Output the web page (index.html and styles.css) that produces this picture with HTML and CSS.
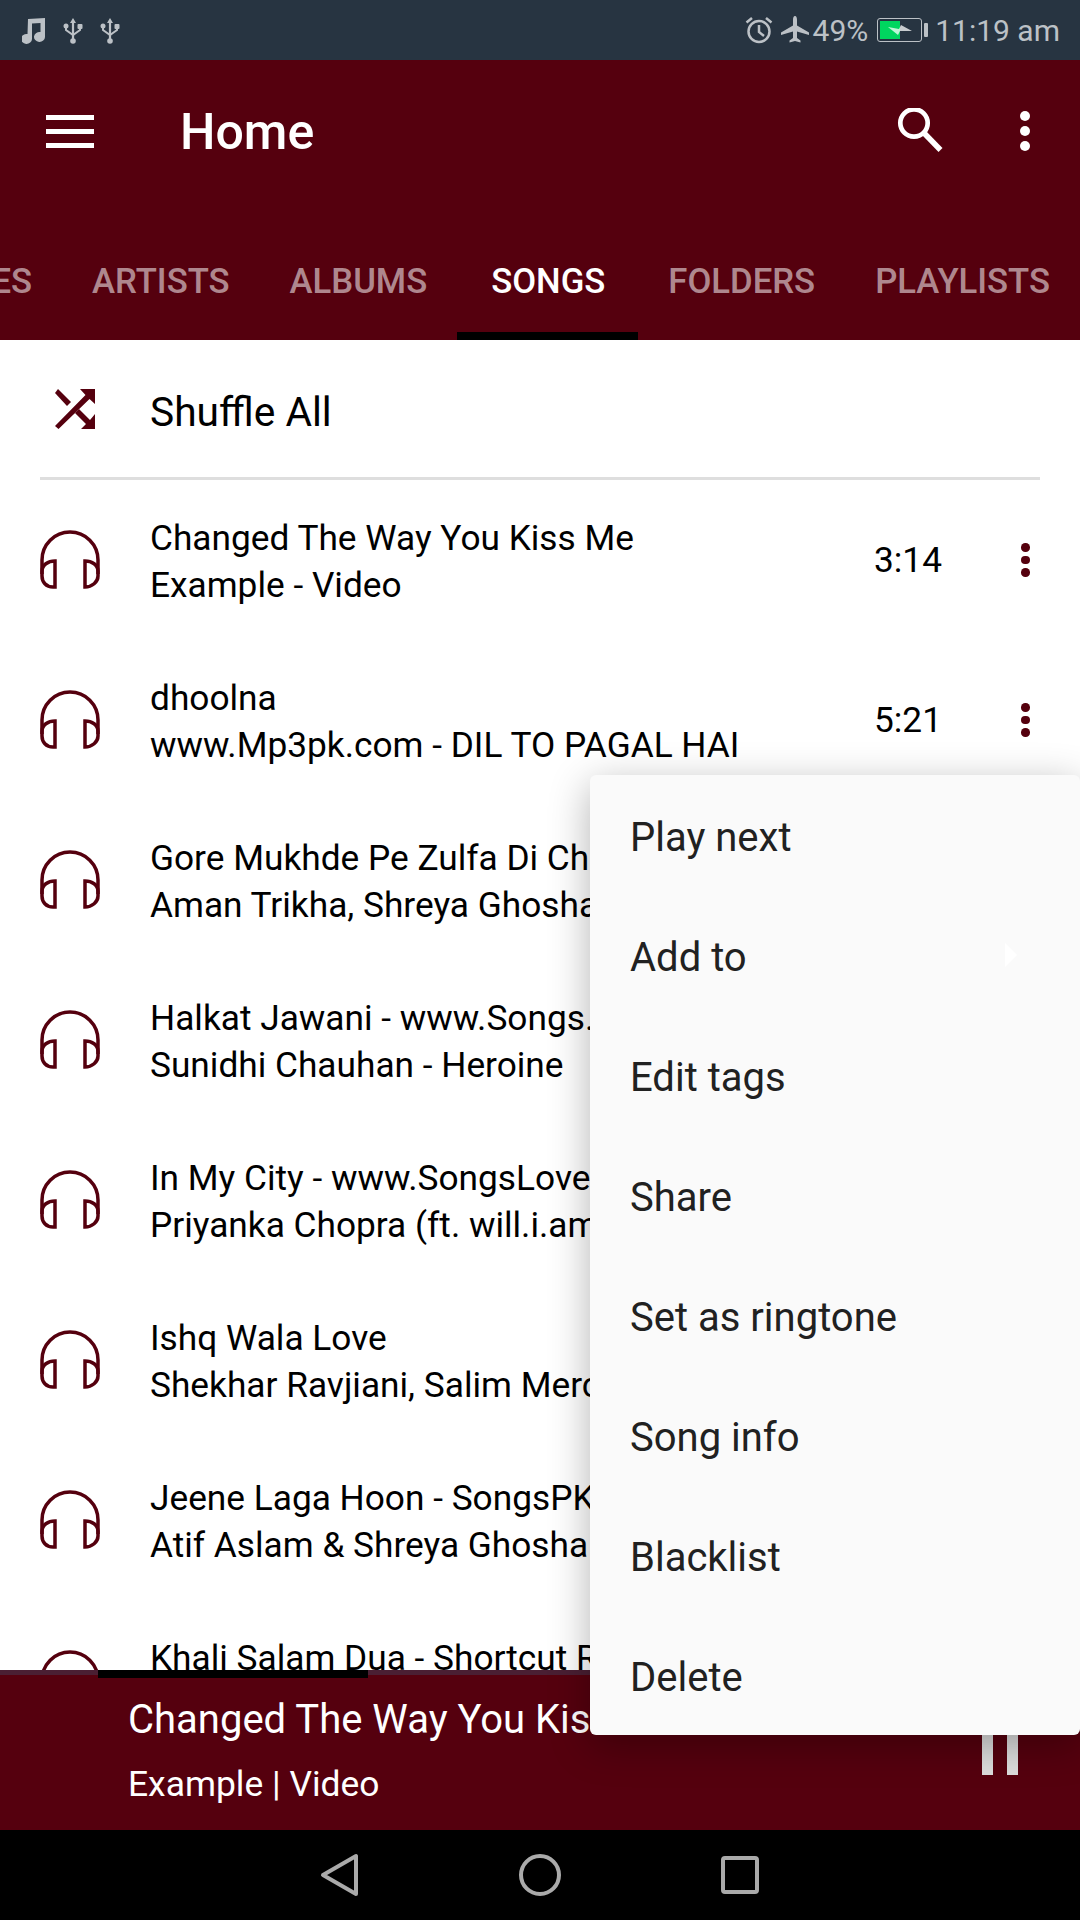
FILE: index.html
```html
<!DOCTYPE html>
<html lang="en">

<head>
    <meta charset="UTF-8">
    <meta name="viewport" content="width=device-width, initial-scale=1.0">
    <title>Home</title>
    <link rel="stylesheet" href="styles.css">
</head>

<body>
    <div class="screen">
        <div class="status-bar">
            <div class="status-left">
                <svg class="icon-note" viewBox="0 0 24 28" width="24" height="28">
                    <path fill="#bcc1c6" d="M6 3 L23 2 V21 A5.5 5 0 1 1 18.5 16 V7 L10 7.500 V23 A5.500 5 0 1 1 5.500 18 Z" />
                </svg>
                <svg viewBox="0 0 20 28" width="20" height="28">
                    <g fill="#bcc1c6" stroke="#bcc1c6">
                        <path d="M10 2 L13 7 H7 Z" stroke="none" />
                        <path d="M10 6 V24" stroke-width="2.200" fill="none" />
                        <path d="M3 11 V14 L10 19 L17 14 V11" stroke-width="2" fill="none" />
                        <circle cx="3" cy="10" r="2.500" stroke="none" />
                        <rect x="14.500" y="8" width="5" height="5" rx="1" stroke="none" />
                        <circle cx="10" cy="25" r="2.800" stroke="none" />
                    </g>
                </svg>
                <svg viewBox="0 0 20 28" width="20" height="28">
                    <g fill="#bcc1c6" stroke="#bcc1c6">
                        <path d="M10 2 L13 7 H7 Z" stroke="none" />
                        <path d="M10 6 V24" stroke-width="2.200" fill="none" />
                        <path d="M3 11 V14 L10 19 L17 14 V11" stroke-width="2" fill="none" />
                        <circle cx="3" cy="10" r="2.500" stroke="none" />
                        <rect x="14.500" y="8" width="5" height="5" rx="1" stroke="none" />
                        <circle cx="10" cy="25" r="2.800" stroke="none" />
                    </g>
                </svg>
            </div>
            <div class="status-right">
                <svg class="icon-alarm" viewBox="0 0 28 28" width="28" height="28">
                    <g fill="none" stroke="#bcc1c6" stroke-width="2.500">
                        <circle cx="14" cy="15.500" r="10.500" />
                        <path d="M14 9 V16 L19 20" />
                        <path d="M1.500 6.500 L7 2 M26.500 6.500 L21 2" />
                    </g>
                </svg>
                <svg class="icon-plane" viewBox="0 0 28 28" width="28" height="28">
                    <path fill="#bcc1c6" d="M14 0 C15.500 0 16 2 16 4 V9.500 L28 16.500 V19 L16 15.500 V22 L19.500 24.500 V26.500 L14 25 L8.500 26.500 V24.500 L12 22 V15.500 L0 19 V16.500 L12 9.500 V4 C12 2 12.500 0 14 0 Z" />
                </svg>
                <span class="battery-pct">49%</span>
                <div class="battery">
                    <div class="battery-fill"></div>
                    <svg class="battery-bolt" viewBox="0 0 24 10" width="24" height="10">
                        <path fill="#fff" fill-opacity="0.75" d="M0 2 L11 4 L13 0 L24 6 L12 6 L10 10 Z" />
                    </svg>
                </div>
                <div class="battery-tip"></div>
                <span class="clock">11:19 am</span>
            </div>
        </div>

        <div class="app-bar">
            <div class="toolbar">
                <div class="hamburger">
                    <span></span>
                    <span></span>
                    <span></span>
                </div>
                <div class="toolbar-title">Home</div>
                <svg class="icon-search" viewBox="0 0 46 46" width="46" height="46">
                    <circle cx="17" cy="15" r="13.700" fill="none" stroke="#fff" stroke-width="4.700" />
                    <path d="M27 25 L43.500 42" stroke="#fff" stroke-width="5.500" />
                </svg>
                <div class="dots dots-white">
                    <span></span>
                    <span></span>
                    <span></span>
                </div>
            </div>
            <div class="tabs">
                <div class="tab">GENRES</div>
                <div class="tab">ARTISTS</div>
                <div class="tab">ALBUMS</div>
                <div class="tab active">SONGS</div>
                <div class="tab">FOLDERS</div>
                <div class="tab">PLAYLISTS</div>
            </div>
        </div>

        <div class="list">
            <div class="shuffle-row">
                <svg class="icon-shuffle" viewBox="0 0 40 40" width="40" height="40">
                    <g fill="#55000e">
                        <path d="M3 0 L16 13 L12 17 L0 4 Z" />
                        <path d="M40 0 V15 L34.500 10 L3.500 40 L0 37 L30.500 6 L25 0 Z" />
                        <path d="M24 20 L35 31 L40 25 V40 H26 L31 35 L20 24 Z" />
                    </g>
                </svg>
                <span>Shuffle All</span>
            </div>

            <div class="song">
                <svg class="icon-phones" viewBox="0 0 60 60" width="60" height="60">
                    <g fill="none" stroke="#55000e" stroke-width="3.500">
                        <path d="M2 44 V30 A28 28 0 0 1 58 30 V44" />
                        <path d="M15 31 V57 H13 C6 57 2 52 2 46 V41 C2 35 8 31 15 31 Z" />
                        <path d="M45 31 V57 C52 57 58 52 58 46 V41 C58 35 52 31 45 31 Z" />
                    </g>
                </svg>
                <div class="song-text">
                    <div>Changed The Way You Kiss Me</div>
                    <div>Example - Video</div>
                </div>
                <span class="duration">3:14</span>
                <div class="dots dots-red">
                    <span></span>
                    <span></span>
                    <span></span>
                </div>
            </div>

            <div class="song">
                <svg class="icon-phones" viewBox="0 0 60 60" width="60" height="60">
                    <g fill="none" stroke="#55000e" stroke-width="3.500">
                        <path d="M2 44 V30 A28 28 0 0 1 58 30 V44" />
                        <path d="M15 31 V57 H13 C6 57 2 52 2 46 V41 C2 35 8 31 15 31 Z" />
                        <path d="M45 31 V57 C52 57 58 52 58 46 V41 C58 35 52 31 45 31 Z" />
                    </g>
                </svg>
                <div class="song-text">
                    <div>dhoolna</div>
                    <div>www.Mp3pk.com - DIL TO PAGAL HAI</div>
                </div>
                <span class="duration">5:21</span>
                <div class="dots dots-red">
                    <span></span>
                    <span></span>
                    <span></span>
                </div>
            </div>

            <div class="song">
                <svg class="icon-phones" viewBox="0 0 60 60" width="60" height="60">
                    <g fill="none" stroke="#55000e" stroke-width="3.500">
                        <path d="M2 44 V30 A28 28 0 0 1 58 30 V44" />
                        <path d="M15 31 V57 H13 C6 57 2 52 2 46 V41 C2 35 8 31 15 31 Z" />
                        <path d="M45 31 V57 C52 57 58 52 58 46 V41 C58 35 52 31 45 31 Z" />
                    </g>
                </svg>
                <div class="song-text">
                    <div>Gore Mukhde Pe Zulfa Di Chhaon</div>
                    <div>Aman Trikha, Shreya Ghoshal</div>
                </div>
            </div>

            <div class="song">
                <svg class="icon-phones" viewBox="0 0 60 60" width="60" height="60">
                    <g fill="none" stroke="#55000e" stroke-width="3.500">
                        <path d="M2 44 V30 A28 28 0 0 1 58 30 V44" />
                        <path d="M15 31 V57 H13 C6 57 2 52 2 46 V41 C2 35 8 31 15 31 Z" />
                        <path d="M45 31 V57 C52 57 58 52 58 46 V41 C58 35 52 31 45 31 Z" />
                    </g>
                </svg>
                <div class="song-text">
                    <div>Halkat Jawani - www.Songs.PK</div>
                    <div>Sunidhi Chauhan - Heroine</div>
                </div>
            </div>

            <div class="song">
                <svg class="icon-phones" viewBox="0 0 60 60" width="60" height="60">
                    <g fill="none" stroke="#55000e" stroke-width="3.500">
                        <path d="M2 44 V30 A28 28 0 0 1 58 30 V44" />
                        <path d="M15 31 V57 H13 C6 57 2 52 2 46 V41 C2 35 8 31 15 31 Z" />
                        <path d="M45 31 V57 C52 57 58 52 58 46 V41 C58 35 52 31 45 31 Z" />
                    </g>
                </svg>
                <div class="song-text">
                    <div>In My City - www.SongsLover</div>
                    <div>Priyanka Chopra (ft. will.i.am)</div>
                </div>
            </div>

            <div class="song">
                <svg class="icon-phones" viewBox="0 0 60 60" width="60" height="60">
                    <g fill="none" stroke="#55000e" stroke-width="3.500">
                        <path d="M2 44 V30 A28 28 0 0 1 58 30 V44" />
                        <path d="M15 31 V57 H13 C6 57 2 52 2 46 V41 C2 35 8 31 15 31 Z" />
                        <path d="M45 31 V57 C52 57 58 52 58 46 V41 C58 35 52 31 45 31 Z" />
                    </g>
                </svg>
                <div class="song-text">
                    <div>Ishq Wala Love</div>
                    <div>Shekhar Ravjiani, Salim Merchant</div>
                </div>
            </div>

            <div class="song">
                <svg class="icon-phones" viewBox="0 0 60 60" width="60" height="60">
                    <g fill="none" stroke="#55000e" stroke-width="3.500">
                        <path d="M2 44 V30 A28 28 0 0 1 58 30 V44" />
                        <path d="M15 31 V57 H13 C6 57 2 52 2 46 V41 C2 35 8 31 15 31 Z" />
                        <path d="M45 31 V57 C52 57 58 52 58 46 V41 C58 35 52 31 45 31 Z" />
                    </g>
                </svg>
                <div class="song-text">
                    <div>Jeene Laga Hoon - SongsPK</div>
                    <div>Atif Aslam &amp; Shreya Ghoshal</div>
                </div>
            </div>

            <div class="song">
                <svg class="icon-phones" viewBox="0 0 60 60" width="60" height="60">
                    <g fill="none" stroke="#55000e" stroke-width="3.500">
                        <path d="M2 44 V30 A28 28 0 0 1 58 30 V44" />
                        <path d="M15 31 V57 H13 C6 57 2 52 2 46 V41 C2 35 8 31 15 31 Z" />
                        <path d="M45 31 V57 C52 57 58 52 58 46 V41 C58 35 52 31 45 31 Z" />
                    </g>
                </svg>
                <div class="song-text">
                    <div>Khali Salam Dua - Shortcut Romeo</div>
                    <div>&nbsp;</div>
                </div>
            </div>
        </div>

        <div class="mini-player">
            <div class="progress"></div>
            <div class="mini-text">
                <div class="mini-title">Changed The Way You Kiss Me</div>
                <div class="mini-sub">Example | Video</div>
            </div>
            <div class="pause">
                <span></span>
                <span></span>
            </div>
        </div>

        <div class="nav-bar">
            <svg viewBox="0 0 40 44" width="40" height="44">
                <path d="M3 22 L36 3 V41 Z" fill="none" stroke="#aaa" stroke-width="4" stroke-linejoin="round" />
            </svg>
            <svg viewBox="0 0 44 44" width="44" height="44">
                <circle cx="22" cy="22" r="19" fill="none" stroke="#aaa" stroke-width="4" />
            </svg>
            <svg viewBox="0 0 40 40" width="40" height="40">
                <rect x="3" y="3" width="34" height="34" rx="2" fill="none" stroke="#aaa" stroke-width="4" />
            </svg>
        </div>

        <div class="popup-menu">
            <div class="menu-item">Play next</div>
            <div class="menu-item">Add to <span class="submenu-arrow"></span></div>
            <div class="menu-item">Edit tags</div>
            <div class="menu-item">Share</div>
            <div class="menu-item">Set as ringtone</div>
            <div class="menu-item">Song info</div>
            <div class="menu-item">Blacklist</div>
            <div class="menu-item">Delete</div>
        </div>
    </div>
</body>

</html>
```

FILE: styles.css
```css
* {
    box-sizing: border-box;
}

body {
    margin: 0;
    font-family: Roboto, "Liberation Sans", sans-serif;
    background-color: #fff;
}

.screen {
    position: relative;
    width: 1080px;
    height: 1920px;
    display: flex;
    flex-direction: column;
    overflow: hidden;
}

/* status bar */
.status-bar {
    height: 60px;
    flex-shrink: 0;
    background-color: #273441;
    color: #bcc1c6;
    display: flex;
    align-items: center;
    justify-content: space-between;
    padding: 0 20px 0 22px;
    font-size: 30px;
}

.status-left {
    display: flex;
    align-items: center;
    gap: 17px;
}

.status-right {
    display: flex;
    align-items: center;
}

.icon-plane {
    margin-left: 8px;
}

.battery-pct {
    margin-left: 4px;
}

.battery {
    position: relative;
    width: 45px;
    height: 24px;
    margin-left: 9px;
    border: 1px solid #bcc1c6;
    border-radius: 3px;
    padding: 2px;
}

.battery-fill {
    width: 20px;
    height: 100%;
    background-color: #00d65f;
}

.battery-bolt {
    position: absolute;
    left: 10px;
    top: 6px;
}

.battery-tip {
    width: 4px;
    height: 14px;
    margin-left: 2px;
    background-color: #bcc1c6;
    border-radius: 1px;
}

.clock {
    margin-left: 7px;
}

/* app bar and tabs */
.app-bar {
    height: 280px;
    flex-shrink: 0;
    background-color: #55000e;
}

.toolbar {
    height: 142px;
    display: flex;
    align-items: center;
    padding-left: 46px;
    color: #fff;
}

.hamburger {
    width: 48px;
    display: flex;
    flex-direction: column;
    gap: 9px;
}

.hamburger span {
    height: 5px;
    background-color: #fff;
}

.toolbar-title {
    margin-left: 86px;
    padding-top: 2px;
    font-size: 50px;
    font-weight: 500;
    flex: 1;
}

.icon-search {
    margin-right: 77px;
}

.dots {
    display: flex;
    flex-direction: column;
}

.dots span {
    border-radius: 50%;
}

.dots-white {
    gap: 5px;
    margin-right: 50px;
}

.dots-white span {
    width: 10px;
    height: 10px;
    background-color: #fff;
}

.dots-red {
    gap: 4px;
    margin-left: 79px;
}

.dots-red span {
    width: 8.500px;
    height: 8.500px;
    background-color: #55000e;
}

.tabs {
    height: 120px;
    margin-top: 18px;
    display: flex;
    justify-content: flex-end;
    overflow: hidden;
}

.tab {
    height: 120px;
    padding: 2px 30px 0;
    flex-shrink: 0;
    display: flex;
    align-items: center;
    font-size: 34.700px;
    font-weight: 500;
    color: rgba(255, 255, 255, 0.55);
}

.tab.active {
    padding: 2px 33px 0 34px;
    color: #fff;
    box-shadow: inset 0 -8px 0 #000;
}

/* song list */
.list {
    flex: 1;
    overflow: hidden;
    background-color: #fff;
}

.shuffle-row {
    height: 140px;
    margin: 0 40px;
    display: flex;
    align-items: center;
    padding: 6px 0 0 15px;
    border-bottom: 3px solid #dedede;
    font-size: 40.700px;
    color: #000;
}

.icon-shuffle {
    margin: -6px 55px 0 0;
}

.song {
    height: 160px;
    padding-left: 40px;
    display: flex;
    align-items: center;
    white-space: nowrap;
}

.icon-phones {
    flex-shrink: 0;
    margin-right: 50px;
}

.song-text {
    width: 724px;
    padding-top: 4px;
    font-size: 35.250px;
    line-height: 47px;
    color: #000;
}

.duration {
    width: 68px;
    font-size: 35.250px;
    color: #000;
}

/* now playing bar */
.mini-player {
    position: relative;
    height: 160px;
    flex-shrink: 0;
    padding: 20px 0 0 128px;
    background-color: #55000e;
    border-top: 5px solid #4a1f33;
    color: #fff;
    white-space: nowrap;
}

.progress {
    position: absolute;
    left: 98px;
    top: -5px;
    width: 270px;
    height: 8px;
    background-color: #000;
}

.mini-title {
    font-size: 40px;
    line-height: 50px;
}

.mini-sub {
    margin-top: 17px;
    font-size: 35.400px;
    line-height: 44px;
}

.pause {
    position: absolute;
    left: 982px;
    top: 50px;
    display: flex;
    gap: 14px;
}

.pause span {
    width: 11px;
    height: 50px;
    background-color: #ddd;
}

/* system nav */
.nav-bar {
    height: 90px;
    flex-shrink: 0;
    background-color: #000;
    display: flex;
    align-items: center;
    justify-content: center;
    gap: 158px;
}

/* song popup menu */
.popup-menu {
    position: absolute;
    left: 590px;
    top: 775px;
    width: 490px;
    height: 960px;
    background-color: #fafafa;
    border-radius: 6px;
    box-shadow: 0 10px 40px rgba(0, 0, 0, 0.3);
}

.menu-item {
    position: relative;
    height: 120px;
    padding: 4px 0 0 40px;
    display: flex;
    align-items: center;
    font-size: 40px;
    color: #212121;
}

.submenu-arrow {
    position: absolute;
    left: 415px;
    top: 48px;
    border-left: 12px solid #fff;
    border-top: 12px solid transparent;
    border-bottom: 12px solid transparent;
}
```
